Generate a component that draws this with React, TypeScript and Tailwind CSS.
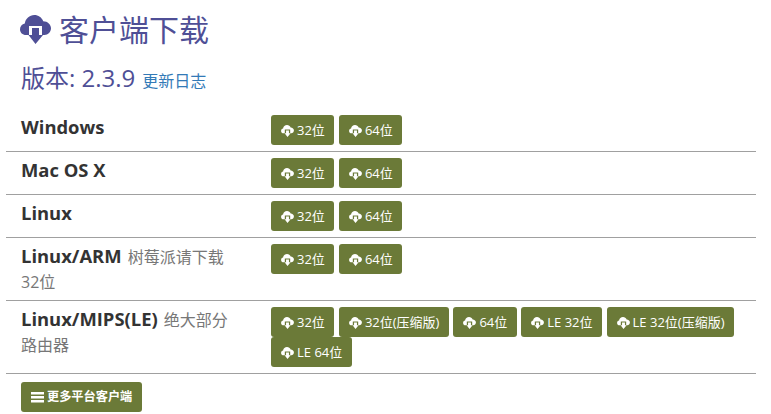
const FONT = "font-['Open_Sans','Noto_Sans_CJK_SC',sans-serif]";

function CloudIcon({ className }: { className: string }) {
  return (
    <svg viewBox="0 0 31 29" className={className} fill="currentColor">
      <path d="M9 20H6C2.500 20 0 17.500 0 14.200 0 11.300 2 9 4.800 8.500 5.500 3.600 9.500 0 14.300 0c4 0 7.500 2.500 8.900 6.200C27.700 6.300 31 9.500 31 13.300 31 17 28 20 24.500 20H22V11H9z" />
      <path d="M12 13h7v7h4l-7.500 9L8.500 20H12z" />
    </svg>
  );
}

function DownloadButton({ label }: { label: string }) {
  return (
    <a className="flex h-[30px] items-center rounded-[3px] bg-[#6b7a38] pt-[1px] pr-[9.5px] pl-[10px] text-[13px] font-normal text-white">
      <CloudIcon className="mr-[3px] h-[12px] w-[13px]" />
      {label}
    </a>
  );
}

const platforms = [
  { name: "Windows", buttons: ["32位", "64位"] },
  { name: "Mac OS X", buttons: ["32位", "64位"] },
  { name: "Linux", buttons: ["32位", "64位"] },
  { name: "Linux/ARM", note: "树莓派请下载32位", buttons: ["32位", "64位"] },
  {
    name: "Linux/MIPS(LE)",
    note: "绝大部分路由器",
    buttons: ["32位", "32位(压缩版)", "64位", "LE 32位", "LE 32位(压缩版)", "LE 64位"],
  },
];

export default function App() {
  return (
    <div className={`${FONT} h-[414px] w-[771px] overflow-hidden bg-white px-[6px]`}>
      <div className="w-[750px]">
        <h1 className="flex h-[60px] items-center px-[14px] pb-[2px] text-[30px] leading-[33px] font-normal text-[#4f4f96]">
          <CloudIcon className="mr-[8px] h-[29px] w-[31px]" />
          客户端下载
        </h1>
        <h2 className="flex h-[49px] items-baseline px-[15px] text-[24px] leading-[36px] font-normal text-[#4f4f96]">
          版本: 2.3.9
          <a className="ml-[7px] text-[16px] text-[#337ab7]">更新日志</a>
        </h2>
        {platforms.map((p) => (
          <div key={p.name} className="flex border-b border-[#a0a0a0] py-[6px]">
            <div className="-mb-[1px] w-[250px] shrink-0 px-[15px] pt-[1px] text-[16px] leading-[25px] text-[#777]">
              <span className="mr-[2px] text-[18.4px] leading-[20px] font-bold text-[#333]">{p.name}</span> {p.note}
            </div>
            <div className="flex flex-1 flex-wrap gap-x-[4.5px] px-[15px]">
              {p.buttons.map((b) => (
                <DownloadButton key={b} label={b} />
              ))}
            </div>
          </div>
        ))}
        <div className="px-[15px] pt-[8px]">
          <a className="inline-flex h-[30px] items-center rounded-[3px] bg-[#6b7a38] px-[10px] text-[12.2px] font-semibold text-white">
            <svg viewBox="0 0 13 11" className="mr-[3px] h-[11px] w-[13px]" fill="currentColor">
              <rect x="0" y="0" width="13" height="2.500" />
              <rect x="0" y="4" width="13" height="2.500" />
              <rect x="0" y="8" width="13" height="2.500" />
            </svg>
            更多平台客户端
          </a>
        </div>
      </div>
    </div>
  );
}
